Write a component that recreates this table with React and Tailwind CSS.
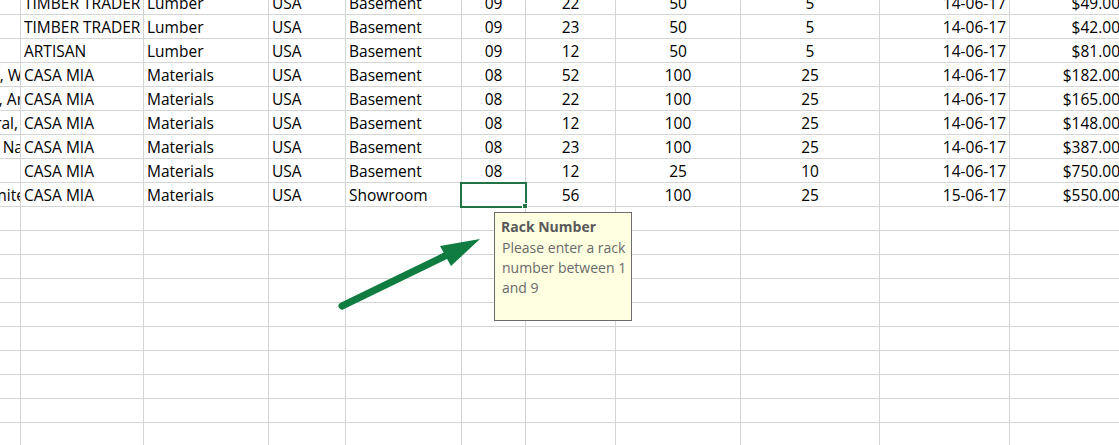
import React from 'react';

const rows = [
  { a: '', b: 'TIMBER TRADER', c: 'Lumber', d: 'USA', e: 'Basement', f: '09', g: '22', h: '50', i: '5', j: '14-06-17', k: '$49.00' },
  { a: '', b: 'TIMBER TRADER', c: 'Lumber', d: 'USA', e: 'Basement', f: '09', g: '23', h: '50', i: '5', j: '14-06-17', k: '$42.00' },
  { a: '', b: 'ARTISAN', c: 'Lumber', d: 'USA', e: 'Basement', f: '09', g: '12', h: '50', i: '5', j: '14-06-17', k: '$81.00' },
  { a: ', W', aShift: '-mr-[2px]', b: 'CASA MIA', c: 'Materials', d: 'USA', e: 'Basement', f: '08', g: '52', h: '100', i: '25', j: '14-06-17', k: '$182.00' },
  { a: ', Ar', aShift: '-mr-[3px]', b: 'CASA MIA', c: 'Materials', d: 'USA', e: 'Basement', f: '08', g: '22', h: '100', i: '25', j: '14-06-17', k: '$165.00' },
  { a: 'ral,', aShift: 'mr-[2px]', b: 'CASA MIA', c: 'Materials', d: 'USA', e: 'Basement', f: '08', g: '12', h: '100', i: '25', j: '14-06-17', k: '$148.00' },
  { a: 'Na', aShift: '-mr-[3px]', b: 'CASA MIA', c: 'Materials', d: 'USA', e: 'Basement', f: '08', g: '23', h: '100', i: '25', j: '14-06-17', k: '$387.00' },
  { a: '', b: 'CASA MIA', c: 'Materials', d: 'USA', e: 'Basement', f: '08', g: '12', h: '25', i: '10', j: '14-06-17', k: '$750.00' },
  { a: 'nite', aShift: '-mr-[5px]', b: 'CASA MIA', c: 'Materials', d: 'USA', e: 'Showroom', f: '', g: '56', h: '100', i: '25', j: '15-06-17', k: '$550.00' },
];

const emptyRows = Array.from({ length: 10 }, () => ({}));

const cell = 'h-[23px] border-r border-[#d4d4d4] overflow-hidden whitespace-nowrap pt-[1px] leading-[22px]';

const Row = ({ r }) => (
  <div className="flex h-[24px] border-b border-[#d4d4d4]">
    <div className={`${cell} w-[21px] shrink-0 flex justify-end`}>
      <span className={r.aShift || ''}>{r.a}</span>
    </div>
    <div className={`${cell} w-[123px] shrink-0 pl-[3px]`}>{r.b}</div>
    <div className={`${cell} w-[125px] shrink-0 pl-[3px]`}>{r.c}</div>
    <div className={`${cell} w-[77px] shrink-0 pl-[3px]`}>{r.d}</div>
    <div className={`${cell} w-[116px] shrink-0 pl-[3px]`}>{r.e}</div>
    <div className={`${cell} w-[64px] shrink-0 text-center`}>{r.f}</div>
    <div className={`${cell} w-[90px] shrink-0 text-center`}>{r.g}</div>
    <div className={`${cell} w-[125px] shrink-0 text-center`}>{r.h}</div>
    <div className={`${cell} w-[139px] shrink-0 text-center`}>{r.i}</div>
    <div className={`${cell} w-[130px] shrink-0 text-right pr-[3px]`}>{r.j}</div>
    <div className={`${cell} w-[113px] shrink-0 text-right pr-[2px]`}>{r.k}</div>
  </div>
);

export default function App() {
  return (
    <div className="relative w-[1119px] h-[445px] overflow-hidden bg-white text-black text-[15.5px] font-['Open_Sans',sans-serif]">
      <div className="-mt-[9px]">
        {rows.map((r, i) => (
          <Row key={i} r={r} />
        ))}
        {emptyRows.map((r, i) => (
          <Row key={'e' + i} r={r} />
        ))}
      </div>

      {/* active cell */}
      <div className="absolute left-[460px] top-[182px] w-[67px] h-[26px] border-2 border-[#217346]"></div>
      <div className="absolute left-[522px] top-[203px] w-[6px] h-[6px] bg-[#217346] border border-white"></div>

      {/* input message */}
      <div className="absolute left-[494px] top-[212px] w-[138px] h-[109px] bg-[#ffffe1] border border-[#6b6b6b] pt-[4px] pl-[6px]">
        <div className="text-[14px] font-bold leading-[20px] text-[#595959]">Rack Number</div>
        <div className="mt-[1px] pl-[1px] text-[14px] leading-[20px] text-[#6a6a6a]">
          Please enter a rack
          <br />
          number between 1
          <br />
          and 9
        </div>
      </div>

      {/* arrow */}
      <svg className="absolute left-0 top-0 pointer-events-none" width="1119" height="445">
        <line x1="342" y1="306" x2="447" y2="255" stroke="#107c41" strokeWidth="7" strokeLinecap="round" />
        <polygon points="480,239 440,246 451,266" fill="#107c41" />
      </svg>
    </div>
  );
}
